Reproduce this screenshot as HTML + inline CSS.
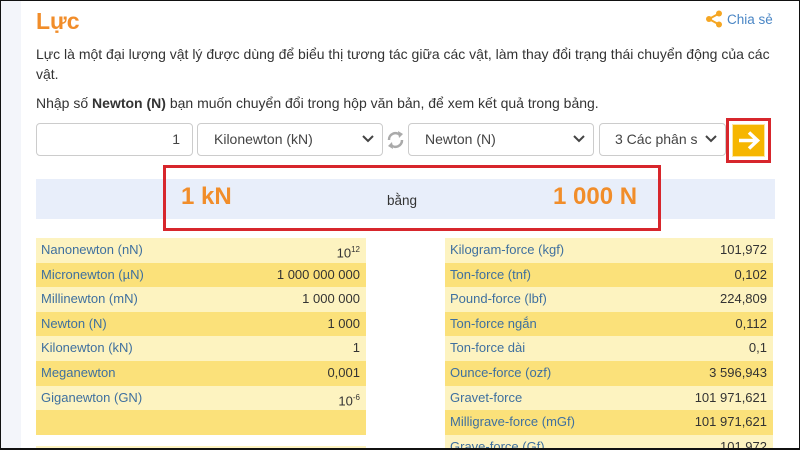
<!DOCTYPE html>
<html style="overflow:hidden;height:450px"><head><meta charset="utf-8"><style>
*{margin:0;padding:0;box-sizing:border-box}
body{width:800px;height:450px;overflow:hidden;background:#fff;font-family:"Liberation Sans",sans-serif;position:relative;color:#333}
.frame{position:absolute;left:0;top:0;width:800px;height:450px;border:1px solid #111;border-bottom:2px solid #111;pointer-events:none;z-index:10}
.side{position:absolute;left:1px;top:0;width:20px;height:450px;background:#f3f5fa}
.a{position:absolute}
h1{position:absolute;left:36px;top:8px;font-size:23px;color:#f18d2a;font-weight:bold}
.share{left:705px;top:10px;font-size:13.5px;color:#4a86c5}
p{position:absolute;left:36px;font-size:14px;color:#333;line-height:20px;white-space:nowrap}
.box{position:absolute;top:123px;height:33px;border:1px solid #ccc;border-radius:4px;background:#fff;font-size:14px;color:#444;line-height:31px}
.chev{position:absolute;right:8px;top:11px}
.band{left:36px;top:179px;width:739px;height:40px;background:#e8eefa}
.red{border:3px solid #d7262c}
.tbl{position:absolute;width:330px;overflow:hidden}
.r{height:24.6px;line-height:24.6px;font-size:13px;display:flex;justify-content:space-between;padding:0 6px 0 5px}
.r span:first-child{color:#3f709f}
.l{background:#fdf3c0}.d{background:#fbe17a}
sup{font-size:8px}
</style></head><body>
<div class="side"></div>
<h1>Lực</h1>
<div class="a share"><svg width="18" height="18" viewBox="0 0 18 18" style="vertical-align:-4px;margin-right:4px"><circle cx="14" cy="3.5" r="3" fill="#f5a623"/><circle cx="4" cy="9" r="3" fill="#f5a623"/><circle cx="14" cy="14.5" r="3" fill="#f5a623"/><path d="M4 9L14 3.5M4 9L14 14.5" stroke="#f5a623" stroke-width="2"/></svg>Chia sẻ</div>
<p style="top:44px">Lực là một đại lượng vật lý được dùng để biểu thị tương tác giữa các vật, làm thay đổi trạng thái chuyển động của các<br>vật.</p>
<p style="top:93px">Nhập số <b>Newton (N)</b> bạn muốn chuyển đổi trong hộp văn bản, để xem kết quả trong bảng.</p>
<div class="box" style="left:36px;width:157px;text-align:right;padding-right:12px">1</div>
<svg width="0" height="0" style="position:absolute"><defs><path id="cv" d="M1 1l5 5 5-5" stroke="#444" stroke-width="2" fill="none"/></defs></svg>
<div class="box" style="left:197px;width:186px;padding-left:16px">Kilonewton (kN)<svg class="chev" width="12" height="8"><use href="#cv"/></svg></div>
<svg class="a" style="left:386px;top:130px" width="19" height="20" viewBox="0 0 19 20"><path d="M3 10A6.5 6.5 0 0 1 14 5" stroke="#aaa" stroke-width="2.5" fill="none"/><path d="M12 1l5 3-4 4z" fill="#aaa"/><path d="M16 10A6.5 6.5 0 0 1 5 15" stroke="#aaa" stroke-width="2.5" fill="none"/><path d="M7 19l-5-3 4-4z" fill="#aaa"/></svg>
<div class="box" style="left:408px;width:186px;padding-left:16px">Newton (N)<svg class="chev" width="12" height="8"><use href="#cv"/></svg></div>
<div class="box" style="left:599px;width:127px;padding-left:15px">3 Các phân s<svg class="chev" width="12" height="8"><use href="#cv"/></svg></div>
<div class="a red" style="left:726px;top:118px;width:45px;height:45px;padding:3px"><div style="background:#f6b600;width:100%;height:100%;border:1px solid #fde6a0;position:relative"><svg width="31" height="31" viewBox="0 0 31 31" style="position:absolute;left:0;top:0"><path d="M6 15.5H24M16 7.5l8.5 8-8.5 8" stroke="#fff" stroke-width="3.5" fill="none"/></svg></div></div>
<div class="a band"></div>
<div class="a red" style="left:163px;top:165px;width:498px;height:66px"></div>
<div class="a" style="left:181px;top:183px;font-size:24px;font-weight:bold;color:#f18d2a">1 kN</div>
<div class="a" style="left:387px;top:193px;font-size:13.5px">bằng</div>
<div class="a" style="left:553px;top:183px;font-size:24px;font-weight:bold;color:#f18d2a">1 000 N</div>
<div class="tbl" style="left:36px;top:238px">
<div class="r l"><span>Nanonewton (nN)</span><span>10<sup>12</sup></span></div>
<div class="r d"><span>Micronewton (µN)</span><span>1 000 000 000</span></div>
<div class="r l"><span>Millinewton (mN)</span><span>1 000 000</span></div>
<div class="r d"><span>Newton (N)</span><span>1 000</span></div>
<div class="r l"><span>Kilonewton (kN)</span><span>1</span></div>
<div class="r d"><span>Meganewton</span><span>0,001</span></div>
<div class="r l"><span>Giganewton (GN)</span><span>10<sup>-6</sup></span></div>
<div class="r d"><span></span><span></span></div>
</div>
<div class="tbl l" style="left:36px;top:446px;height:4px"></div>
<div class="tbl" style="left:445px;top:238px;width:328px;height:212px">
<div class="r l"><span>Kilogram-force (kgf)</span><span>101,972</span></div>
<div class="r d"><span>Ton-force (tnf)</span><span>0,102</span></div>
<div class="r l"><span>Pound-force (lbf)</span><span>224,809</span></div>
<div class="r d"><span>Ton-force ngắn</span><span>0,112</span></div>
<div class="r l"><span>Ton-force dài</span><span>0,1</span></div>
<div class="r d"><span>Ounce-force (ozf)</span><span>3 596,943</span></div>
<div class="r l"><span>Gravet-force</span><span>101 971,621</span></div>
<div class="r d"><span>Milligrave-force (mGf)</span><span>101 971,621</span></div>
<div class="r l"><span>Grave-force (Gf)</span><span>101,972</span></div>
</div>
<div class="frame"></div>
</body></html>
